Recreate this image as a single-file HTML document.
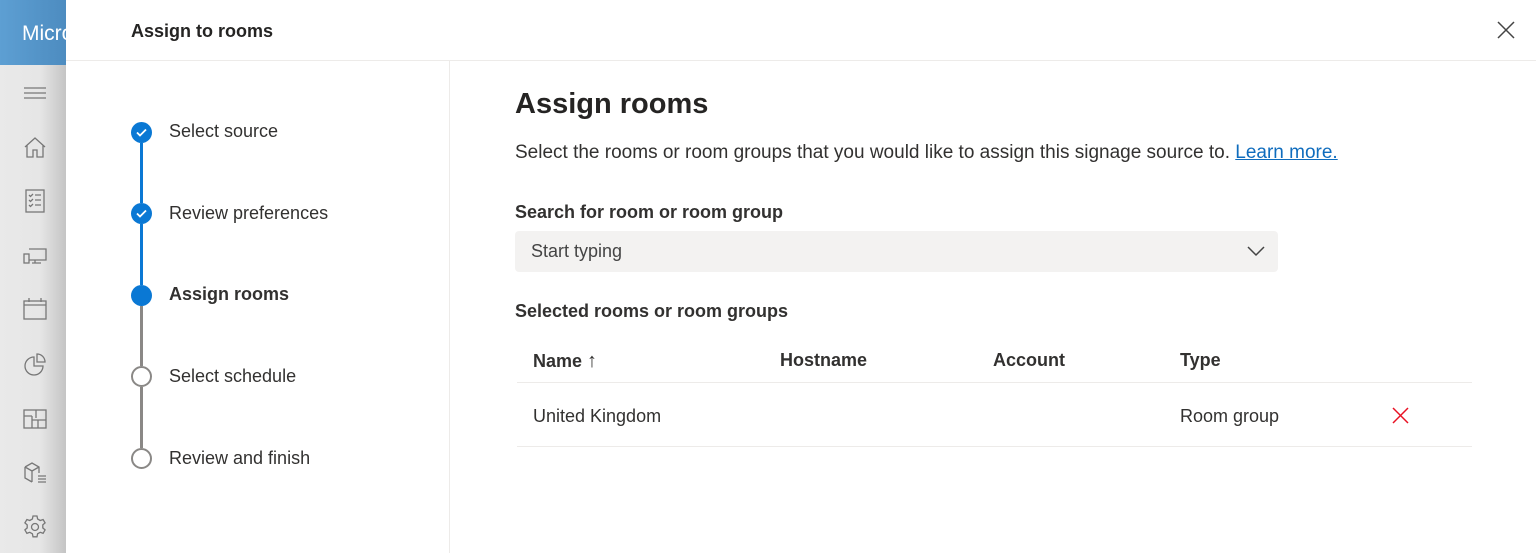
<!DOCTYPE html>
<html><head><style>
*{margin:0;padding:0;box-sizing:border-box}
body{width:1536px;height:553px;overflow:hidden;background:#fff;font-family:"Liberation Sans",sans-serif;color:#323130;position:relative}
.rail{position:absolute;left:0;top:0;width:66px;height:553px;background:linear-gradient(90deg,#e9e9e9 0,#e6e6e6 40px,#c4c4c4 66px)}
.top{position:absolute;left:0;top:0;width:66px;height:65px;background:linear-gradient(90deg,#5d9fd3,#4d8cc0);color:#fff;font-size:21px;padding:22px 0 0 22px;overflow:hidden;white-space:nowrap}
.ic{position:absolute;left:23px;width:24px;height:24px}
.hdr{position:absolute;left:66px;top:0;right:0;height:61px;border-bottom:1px solid #edebe9}
.t{position:absolute;white-space:nowrap}
.dot{position:absolute;left:131px;width:21px;height:21px;border-radius:50%}
.line{position:absolute;left:140px;width:3px}
</style></head><body>
<div class="rail"></div>
<div class="top">Microsoft</div>
<svg class="ic" style="top:81px" viewBox="0 0 24 24" fill="none" stroke="#777" stroke-width="1.3"><path d="M1 7h22M1 12h22M1 17h22"/></svg>
<svg class="ic" style="top:136px" viewBox="0 0 24 24" fill="none" stroke="#777" stroke-width="1.3"><path d="M2 11L12 2l10 9M4 9v12h6v-7h4v7h6V9"/></svg>
<svg class="ic" style="top:189px" viewBox="0 0 24 24" fill="none" stroke="#777" stroke-width="1.3"><rect x="3" y="1" width="18" height="22"/><path d="M6 6l1.5 1.5L10 5M12 6h6M6 11l1.5 1.5L10 10M12 11h6M6 16l1.5 1.5L10 15M12 16h6"/></svg>
<svg class="ic" style="top:243px" viewBox="0 0 24 24" fill="none" stroke="#777" stroke-width="1.3"><path d="M6 6h17v11H6M12 17v3M9 20h9"/><rect x="1" y="11" width="5" height="9"/></svg>
<svg class="ic" style="top:297px" viewBox="0 0 24 24" fill="none" stroke="#777" stroke-width="1.3"><rect x="1" y="4" width="22" height="18"/><path d="M1 8h22M6 1v4M18 1v4"/></svg>
<svg class="ic" style="top:353px" viewBox="0 0 24 24" fill="none" stroke="#777" stroke-width="1.3"><path d="M11 4A9 9 0 1 0 20 13H11z"/><path d="M14 1a8 8 0 0 1 8 8h-8z"/></svg>
<svg class="ic" style="top:407px" viewBox="0 0 24 24" fill="none" stroke="#777" stroke-width="1.3"><rect x="1" y="3" width="22" height="18"/><path d="M1 9h8M9 9v12M13 3v8M9 13h14M15 13v8"/></svg>
<svg class="ic" style="top:461px" viewBox="0 0 24 24" fill="none" stroke="#777" stroke-width="1.3"><path d="M2 6l7-4 7 4v6M2 6v11l7 4M2 6l7 4 7-4M9 10v11M15 15h8M15 18h8M15 21h8"/></svg>
<svg class="ic" style="top:515px" viewBox="0 0 24 24" fill="none" stroke="#777" stroke-width="1.3"><circle cx="12" cy="12" r="3.5"/><path d="M10 1h4l.6 3 2.6 1.5 2.9-1 2 3.4-2.3 2v3l2.3 2-2 3.4-2.9-1-2.6 1.5-.6 3h-4l-.6-3-2.6-1.5-2.9 1-2-3.4 2.3-2v-3l-2.3-2 2-3.4 2.9 1L9.4 4z"/></svg>

<div class="hdr"></div>
<div class="t" style="left:131px;top:21px;font-size:18px;font-weight:bold;color:#252423">Assign to rooms</div>
<svg style="position:absolute;left:1497px;top:21px" width="18" height="18" viewBox="0 0 18 18" stroke="#444" stroke-width="1.5"><path d="M1 1l16 16M17 1L1 17"/></svg>
<div style="position:absolute;left:449px;top:61px;width:1px;height:492px;background:#edebe9"></div>

<div class="line" style="top:143px;height:60px;background:#0a78d4"></div>
<div class="line" style="top:224px;height:61px;background:#0a78d4"></div>
<div class="line" style="top:306px;height:60px;background:#8a8886"></div>
<div class="line" style="top:387px;height:61px;background:#8a8886"></div>
<div class="dot" style="top:122px;background:#0a78d4"><svg width="21" height="21" viewBox="0 0 21 21" fill="none" stroke="#fff" stroke-width="1.8"><path d="M6 10.5l3 3 6-6"/></svg></div>
<div class="dot" style="top:203px;background:#0a78d4"><svg width="21" height="21" viewBox="0 0 21 21" fill="none" stroke="#fff" stroke-width="1.8"><path d="M6 10.5l3 3 6-6"/></svg></div>
<div class="dot" style="top:285px;background:#0a78d4"></div>
<div class="dot" style="top:366px;border:2px solid #8a8886;background:#fff"></div>
<div class="dot" style="top:448px;border:2px solid #8a8886;background:#fff"></div>
<div class="t" style="left:169px;top:121px;font-size:18px">Select source</div>
<div class="t" style="left:169px;top:203px;font-size:18px">Review preferences</div>
<div class="t" style="left:169px;top:284px;font-size:18px;font-weight:bold">Assign rooms</div>
<div class="t" style="left:169px;top:366px;font-size:18px">Select schedule</div>
<div class="t" style="left:169px;top:448px;font-size:18px">Review and finish</div>

<div class="t" style="left:515px;top:88px;font-size:29px;font-weight:600;color:#252423">Assign rooms</div>
<div class="t" style="left:515px;top:142px;font-size:19px">Select the rooms or room groups that you would like to assign this signage source to. <span style="color:#0f6cbd;text-decoration:underline">Learn more.</span></div>
<div class="t" style="left:515px;top:202px;font-size:18px;font-weight:600">Search for room or room group</div>
<div style="position:absolute;left:515px;top:231px;width:763px;height:41px;background:#f3f2f1;border-radius:4px"></div>
<div class="t" style="left:531px;top:241px;font-size:18px;color:#444">Start typing</div>
<svg style="position:absolute;left:1247px;top:245px" width="18" height="12" viewBox="0 0 18 12" fill="none" stroke="#444" stroke-width="1.5"><path d="M1 2l8 8 8-8"/></svg>
<div class="t" style="left:515px;top:301px;font-size:18px;font-weight:600">Selected rooms or room groups</div>
<div class="t" style="left:533px;top:350px;font-size:18px;font-weight:600">Name <span style="font-weight:normal;font-size:20px">↑</span></div>
<div class="t" style="left:780px;top:350px;font-size:18px;font-weight:600">Hostname</div>
<div class="t" style="left:993px;top:350px;font-size:18px;font-weight:600">Account</div>
<div class="t" style="left:1180px;top:350px;font-size:18px;font-weight:600">Type</div>
<div style="position:absolute;left:517px;top:382px;width:955px;height:1px;background:#edebe9"></div>
<div class="t" style="left:533px;top:406px;font-size:18px">United Kingdom</div>
<div class="t" style="left:1180px;top:406px;font-size:18px">Room group</div>
<svg style="position:absolute;left:1392px;top:407px" width="17" height="17" viewBox="0 0 17 17" stroke="#e81123" stroke-width="1.5"><path d="M1 1l15 15M16 1L1 16"/></svg>
<div style="position:absolute;left:517px;top:446px;width:955px;height:1px;background:#edebe9"></div>
</body></html>
